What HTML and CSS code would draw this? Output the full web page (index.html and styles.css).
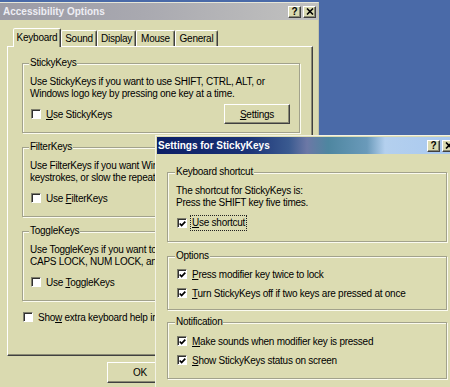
FILE: index.html
```html
<!DOCTYPE html>
<html>
<head>
<title>Accessibility Options</title>
<link rel="stylesheet" href="styles.css">
</head>
<body>

<div class="desktop">

  <div class="window main-win">
    <div class="titlebar titlebar-inactive">
      <span class="title">Accessibility Options</span>
      <div class="caption-btns">
        <span class="cbtn">?</span>
        <span class="cbtn"><svg width="8" height="7" viewBox="0 0 8 7"><path d="M1 0.5 L7 6.5 M7 0.5 L1 6.5" stroke="#000" stroke-width="1.6"/></svg></span>
      </div>
    </div>

    <div class="tabs">
      <div class="tab tab-selected" style="width:48px">Keyboard</div>
      <div class="tab" style="width:36px">Sound</div>
      <div class="tab" style="width:39px">Display</div>
      <div class="tab" style="width:39px">Mouse</div>
      <div class="tab" style="width:43px">General</div>
    </div>

    <div class="tab-panel">
      <fieldset class="group">
        <legend>StickyKeys</legend>
        <p class="desc">Use StickyKeys if you want to use SHIFT, CTRL, ALT, or<br>Windows logo key by pressing one key at a time.</p>
        <div class="option-row">
          <label class="check-label"><span class="check"></span><span><u>U</u>se StickyKeys</span></label>
          <span class="button btn-settings"><u>S</u>ettings</span>
        </div>
      </fieldset>

      <!-- the rest of these groups is hidden under the settings window -->
      <fieldset class="group">
        <legend>FilterKeys</legend>
        <p class="desc">Use FilterKeys if you want Win<br>keystrokes, or slow the repeat</p>
        <div class="option-row">
          <label class="check-label"><span class="check"></span><span>Use <u>F</u>ilterKeys</span></label>
        </div>
      </fieldset>

      <fieldset class="group">
        <legend>ToggleKeys</legend>
        <p class="desc">Use ToggleKeys if you want to<br>CAPS LOCK, NUM LOCK, and</p>
        <div class="option-row">
          <label class="check-label"><span class="check"></span><span>Use <u>T</u>oggleKeys</span></label>
        </div>
      </fieldset>

      <div class="extra-row">
        <label class="check-label"><span class="check"></span><span>Sho<u>w</u> extra keyboard help in</span></label>
      </div>
    </div>

    <div class="dialog-buttons">
      <span class="button btn-ok">OK</span>
    </div>
  </div>

  <div class="window settings-win">
    <div class="titlebar titlebar-active">
      <span class="title">Settings for StickyKeys</span>
      <div class="caption-btns">
        <span class="cbtn">?</span>
        <span class="cbtn"><svg width="8" height="7" viewBox="0 0 8 7"><path d="M1 0.5 L7 6.5 M7 0.5 L1 6.5" stroke="#000" stroke-width="1.6"/></svg></span>
      </div>
    </div>

    <div class="settings-body">
      <fieldset class="group group-wide group-shortcut">
        <legend>Keyboard shortcut</legend>
        <p class="desc">The shortcut for StickyKeys is:<br>Press the SHIFT key five times.</p>
        <div class="check-row shortcut-row">
          <label class="check-label"><span class="check checked"><svg width="8" height="8" viewBox="0 0 8 8"><polyline points="0.8,3.4 3,5.8 7.2,1.4" fill="none" stroke="#000" stroke-width="2"/></svg></span><span class="focus"><u>U</u>se shortcut</span></label>
        </div>
      </fieldset>

      <fieldset class="group group-wide group-options">
        <legend>Options</legend>
        <div class="check-row">
          <label class="check-label"><span class="check checked"><svg width="8" height="8" viewBox="0 0 8 8"><polyline points="0.8,3.4 3,5.8 7.2,1.4" fill="none" stroke="#000" stroke-width="2"/></svg></span><span><u>P</u>ress modifier key twice to lock</span></label>
        </div>
        <div class="check-row">
          <label class="check-label"><span class="check checked"><svg width="8" height="8" viewBox="0 0 8 8"><polyline points="0.8,3.4 3,5.8 7.2,1.4" fill="none" stroke="#000" stroke-width="2"/></svg></span><span><u>T</u>urn StickyKeys off if two keys are pressed at once</span></label>
        </div>
      </fieldset>

      <fieldset class="group group-wide group-notify">
        <legend>Notification</legend>
        <div class="check-row">
          <label class="check-label"><span class="check checked"><svg width="8" height="8" viewBox="0 0 8 8"><polyline points="0.8,3.4 3,5.8 7.2,1.4" fill="none" stroke="#000" stroke-width="2"/></svg></span><span><u>M</u>ake sounds when modifier key is pressed</span></label>
        </div>
        <div class="check-row">
          <label class="check-label"><span class="check checked"><svg width="8" height="8" viewBox="0 0 8 8"><polyline points="0.8,3.4 3,5.8 7.2,1.4" fill="none" stroke="#000" stroke-width="2"/></svg></span><span><u>S</u>how StickyKeys status on screen</span></label>
        </div>
      </fieldset>
    </div>
  </div>

</div>

</body>
</html>
```

FILE: styles.css
```css
body {
  margin: 0;
  background-color: #4a6aa8;
  font-family: "Liberation Sans", Arial, sans-serif;
  font-size: 10px;
  letter-spacing: -0.25px;
  color: #000;
}

.desktop {
  position: relative;
  width: 450px;
  height: 387px;
  overflow: hidden;
}

/* windows sit on the desktop at their own place */
.window {
  position: absolute;
  background-color: #dadab0;
}

.main-win {
  left: 0;
  top: 2px;
  width: 318px;
  height: 392px;
  border-top: 1px solid #e6e6d8;
  border-right: 1px solid #c4c4a8;
}

.settings-win {
  left: 155px;
  top: 135px;
  width: 300px;
  height: 260px;
  padding: 1px;
  border-top: 1px solid #f2f2e4;
  border-left: 1px solid #f2f2e4;
  background-color: #dcdcb2;
}

.titlebar {
  display: flex;
  align-items: center;
  height: 17px;
  padding: 0 2px 0 3px;
  color: #fff;
  font-weight: bold;
  letter-spacing: 0;
}

.titlebar-inactive {
  background: linear-gradient(90deg, #9b9ba6 0%, #a9a9b0 45%, #c2c2c0 100%);
  color: #eeeef4;
}

.titlebar-active {
  padding-left: 1px;
  background: linear-gradient(90deg, #0c1f66 0%, #1a3276 30%, #3a5a90 44%, #6c78a6 50%, #4e86a0 57%, #6a9aba 70%, #b4d0ee 76%, #a8c8f0 100%);
}

.title {
  flex: 1;
}

.caption-btns {
  display: flex;
  gap: 2px;
}

.cbtn {
  box-sizing: border-box;
  width: 13px;
  height: 12px;
  display: flex;
  align-items: center;
  justify-content: center;
  background-color: #dadab0;
  border: 1px solid;
  border-color: #fff #404040 #404040 #fff;
  box-shadow: inset -1px -1px #8a8a74;
  color: #000;
  font-size: 10px;
  font-weight: bold;
}

/* tabs */
.tabs {
  display: flex;
  align-items: flex-end;
  height: 18px;
  margin: 8px 0 0 13px;
}

.tab {
  box-sizing: border-box;
  height: 16px;
  display: flex;
  align-items: center;
  justify-content: center;
  border: 1px solid;
  border-bottom: 0;
  border-color: #fff #404040 transparent #fff;
  border-radius: 2px 2px 0 0;
  box-shadow: inset -1px 0 #8a8a74;
}

.tab-selected {
  position: relative;
  z-index: 1;
  height: 19px;
  margin-bottom: -1px;
  padding-bottom: 2px;
  background-color: #dadab0;
}

.tab-panel {
  box-sizing: border-box;
  width: 306px;
  height: 310px;
  margin-left: 7px;
  padding: 10px 0 0 14px;
  border: 1px solid;
  border-color: #fff #404040 #404040 #fff;
  box-shadow: inset -1px -1px #8a8a74;
}

/* group boxes */
.group {
  box-sizing: border-box;
  width: 278px;
  margin: 0 0 8px 0;
  padding: 7px 7px 8px 7px;
  border: 1px solid #a2a28c;
  box-shadow: inset 1px 1px #fbfbf0, 1px 1px #fbfbf0;
  min-width: 0;
}

.group legend {
  padding: 0 1px;
  margin-left: -1px;
  line-height: 12px;
  background-color: #dadab0;
}

.desc {
  margin: 0;
  line-height: 12px;
  white-space: nowrap;
}

.option-row {
  display: flex;
  align-items: center;
  justify-content: space-between;
  height: 20px;
  margin-top: 4px;
}

.extra-row {
  display: flex;
  align-items: center;
  height: 16px;
  margin-top: 2px;
}

.check-label {
  display: flex;
  align-items: center;
  gap: 5px;
  white-space: nowrap;
}

.check {
  box-sizing: border-box;
  width: 10px;
  height: 10px;
  margin-left: 1px;
  display: flex;
  align-items: center;
  justify-content: center;
  background-color: #fff;
  border: 1px solid;
  border-color: #7e7e6c #fff #fff #7e7e6c;
  box-shadow: inset 1px 1px #303030;
}

.check svg {
  display: block;
  margin: 1px 0 0 1px;
}

.button {
  box-sizing: border-box;
  display: flex;
  align-items: center;
  justify-content: center;
  height: 20px;
  border: 1px solid;
  border-color: #fff #404040 #404040 #fff;
  box-shadow: inset -1px -1px #8a8a74;
}

.btn-settings {
  width: 66px;
  margin-right: 2px;
}

.dialog-buttons {
  display: flex;
  padding: 6px 0 0 107px;
}

.btn-ok {
  width: 66px;
  height: 21px;
}

/* settings dialog */
.settings-body {
  padding: 12px 0 0 10px;
}

.group-wide {
  width: 280px;
  padding-left: 8px;
  background-color: #dcdcb2;
}

.group-wide legend {
  background-color: #dcdcb2;
}

.group-shortcut {
  padding-bottom: 10px;
}

.group-options {
  padding-top: 4px;
}

.group-notify {
  margin-top: -2px;
  padding-top: 5px;
  padding-bottom: 10px;
}

.check-row {
  display: flex;
  align-items: center;
  height: 16px;
  margin-bottom: 3px;
}

.check-row:last-child {
  margin-bottom: 0;
}

.shortcut-row {
  margin-top: 6px;
}

.focus {
  padding: 1px 1px 2px 1px;
  margin-left: -2px;
  border: 1px dotted #222;
}
```
